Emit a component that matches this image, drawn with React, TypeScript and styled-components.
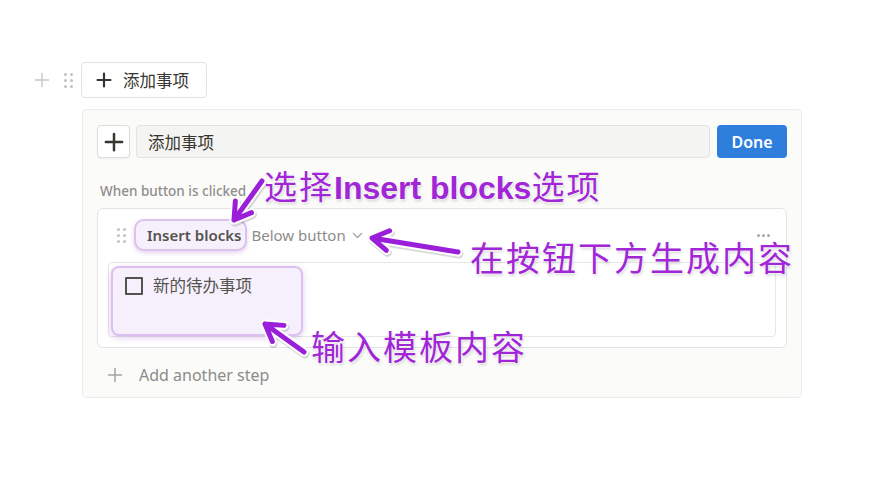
import styled, { createGlobalStyle } from "styled-components";

const GlobalStyle = createGlobalStyle`
  html, body {
    margin: 0;
    padding: 0;
    background: #ffffff;
  }
  body {
    font-family: "Noto Sans", "Noto Sans CJK SC", sans-serif;
    color: #37352f;
  }
`;

const Page = styled.div`
  position: relative;
  width: 888px;
  height: 489px;
  padding-top: 62px;
  box-sizing: border-box;
  overflow: hidden;
`;

const TopRow = styled.div`
  display: flex;
  align-items: center;
  height: 36px;
  padding-left: 34px;
`;

const GhostPlus = styled.span`
  display: flex;
  width: 16px;
  margin-right: 14px;
`;

const Handle = styled.span<{ $gap: number }>`
  display: grid;
  grid-template-columns: 3px 3px;
  gap: 3px 3px;
  margin-right: ${(p) => p.$gap}px;
  span {
    width: 3px;
    height: 3px;
    border-radius: 50%;
    background: #c3c2bf;
  }
`;

const AddButton = styled.div`
  display: flex;
  align-items: center;
  gap: 11px;
  height: 36px;
  box-sizing: border-box;
  padding: 0 17px 0 14px;
  border: 1px solid #e3e2e0;
  border-radius: 4px;
  background: #fff;
  font-size: 16.5px;
  color: #37352f;
`;

const Panel = styled.div`
  margin: 11px 0 0 82px;
  width: 720px;
  height: 289px;
  box-sizing: border-box;
  border: 1px solid #ebebe9;
  border-radius: 5px;
  background: #fbfbfa;
  padding: 15px 14px 0;
`;

const HeaderRow = styled.div`
  display: flex;
  gap: 6px;
  height: 33px;
`;

const PlusBox = styled.div`
  width: 33px;
  height: 33px;
  box-sizing: border-box;
  display: flex;
  align-items: center;
  justify-content: center;
  border: 1px solid #dddcda;
  border-radius: 4px;
  background: #fff;
  box-shadow: 0 1px 2px rgba(0, 0, 0, 0.06);
`;

const NameInput = styled.div`
  flex: 1;
  display: flex;
  align-items: center;
  box-sizing: border-box;
  padding-left: 11px;
  border: 1px solid #e2e2e0;
  border-radius: 4px;
  background: #f4f4f2;
  font-size: 16.5px;
  color: #37352f;
`;

const DoneButton = styled.div`
  width: 70px;
  margin-left: 1px;
  display: flex;
  align-items: center;
  justify-content: center;
  border-radius: 4px;
  background: #2e7fdc;
  color: #fff;
  font-size: 16px;
  font-weight: 600;
`;

const TriggerLabel = styled.div`
  margin: 24px 0 0 3px;
  font-size: 13.5px;
  line-height: 18px;
  font-weight: 500;
  color: #8f8e8b;
`;

const StepCard = styled.div`
  margin-top: 8px;
  height: 140px;
  box-sizing: border-box;
  border: 1px solid #e3e3e1;
  border-radius: 6px;
  background: #fff;
  padding: 10px 10px;
`;

const StepHeader = styled.div`
  display: flex;
  align-items: center;
  height: 32px;
  padding-left: 9px;
`;

const ActionPill = styled.div`
  display: flex;
  align-items: center;
  height: 32px;
  box-sizing: border-box;
  padding: 0 4px 0 11px;
  border: 2px solid #dcc3ee;
  border-radius: 10px;
  background: #f6f0fc;
  box-shadow: 0 2px 4px rgba(150, 80, 200, 0.25);
  font-size: 15px;
  font-weight: 600;
  color: #55534e;
`;

const Placement = styled.div`
  display: flex;
  align-items: center;
  gap: 6px;
  margin-left: 4px;
  font-size: 15px;
  color: #8d8c89;
`;

const MoreDots = styled.span`
  margin-left: auto;
  margin-right: 6px;
  display: flex;
  gap: 2px;
  span {
    width: 3px;
    height: 3px;
    border-radius: 50%;
    background: #a9a8a5;
  }
`;

const ContentArea = styled.div`
  margin-top: 11px;
  height: 75px;
  box-sizing: border-box;
  border: 1px solid #e6e6e4;
  border-radius: 4px;
  padding: 3px 2px;
`;

const TemplateBox = styled.div`
  width: 192px;
  height: 70px;
  box-sizing: border-box;
  border: 2px solid #dcc0ef;
  border-radius: 8px;
  background: #f6f0fd;
  box-shadow: 0 2px 6px rgba(160, 90, 210, 0.3);
  padding: 7px 0 0 12px;
  display: flex;
  align-items: flex-start;
  gap: 10px;
  font-size: 16.5px;
  line-height: 22px;
  color: #55534e;
`;

const Checkbox = styled.span`
  width: 18px;
  height: 18px;
  margin-top: 2px;
  box-sizing: border-box;
  border: 2px solid #55534e;
  border-radius: 1px;
`;

const AddStep = styled.div`
  display: flex;
  align-items: center;
  gap: 16px;
  height: 26px;
  margin-top: 14px;
  padding-left: 10px;
  font-size: 16px;
  color: #8d8c89;
`;

const Note = styled.div<{ $x: number; $y: number; $size: number }>`
  position: absolute;
  left: ${(p) => p.$x}px;
  top: ${(p) => p.$y}px;
  font-family: "Noto Sans CJK SC", sans-serif;
  font-size: ${(p) => p.$size}px;
  line-height: 40px;
  letter-spacing: 2px;
  color: #a026d6;
  white-space: nowrap;
  text-shadow: 0 0 2px #fff, 0 0 2px #fff, 1px 2px 3px rgba(0, 0, 0, 0.18);
  b {
    font-family: "Liberation Sans", Arial, sans-serif;
    font-weight: 700;
    font-size: 32px;
    letter-spacing: 0;
  }
`;

const Overlay = styled.svg`
  position: absolute;
  left: 0;
  top: 0;
  pointer-events: none;
`;

const Plus = ({ size, color, width }: { size: number; color: string; width: number }) => (
  <svg width={size} height={size} viewBox="0 0 16 16">
    <path d="M8 1.5v13M1.5 8h13" stroke={color} strokeWidth={width} strokeLinecap="round" />
  </svg>
);

const Dots = ({ gap }: { gap: number }) => (
  <Handle $gap={gap}>
    {Array.from({ length: 6 }).map((_, i) => (
      <span key={i} />
    ))}
  </Handle>
);

type Pt = [number, number];

const Arrow = ({ tail, tip }: { tail: Pt; tip: Pt }) => {
  const ang = Math.atan2(tail[1] - tip[1], tail[0] - tip[0]);
  const len = 19;
  const spread = 0.55;
  const w1: Pt = [tip[0] + len * Math.cos(ang + spread), tip[1] + len * Math.sin(ang + spread)];
  const w2: Pt = [tip[0] + len * Math.cos(ang - spread), tip[1] + len * Math.sin(ang - spread)];
  const d = `M${tail[0]} ${tail[1]}L${tip[0]} ${tip[1]}M${w1[0]} ${w1[1]}L${tip[0]} ${tip[1]}L${w2[0]} ${w2[1]}`;
  return (
    <g strokeLinecap="round" strokeLinejoin="round" fill="none">
      <path d={d} stroke="rgba(0,0,0,0.15)" strokeWidth={9} transform="translate(1 2)" />
      <path d={d} stroke="#ffffff" strokeWidth={9} />
      <path d={d} stroke="#9b1fd8" strokeWidth={5} />
    </g>
  );
};

export default function App() {
  return (
    <>
      <GlobalStyle />
      <Page>
        <TopRow>
          <GhostPlus>
            <Plus size={16} color="#c6c5c2" width={1.4} />
          </GhostPlus>
          <Dots gap={8} />
          <AddButton>
            <Plus size={16} color="#37352f" width={2.2} />
            添加事项
          </AddButton>
        </TopRow>

        <Panel>
          <HeaderRow>
            <PlusBox>
              <Plus size={20} color="#37352f" width={2} />
            </PlusBox>
            <NameInput>添加事项</NameInput>
            <DoneButton>Done</DoneButton>
          </HeaderRow>

          <TriggerLabel>When button is clicked</TriggerLabel>

          <StepCard>
            <StepHeader>
              <Dots gap={8} />
              <ActionPill>Insert blocks</ActionPill>
              <Placement>
                Below button
                <svg width="11" height="7" viewBox="0 0 11 7">
                  <path d="M1 1l4.5 4.5L10 1" stroke="#a5a4a1" strokeWidth="1.3" fill="none" />
                </svg>
              </Placement>
              <MoreDots>
                <span />
                <span />
                <span />
              </MoreDots>
            </StepHeader>
            <ContentArea>
              <TemplateBox>
                <Checkbox />
                新的待办事项
              </TemplateBox>
            </ContentArea>
          </StepCard>

          <AddStep>
            <Plus size={16} color="#a5a4a1" width={1.5} />
            Add another step
          </AddStep>
        </Panel>

        <Overlay width={888} height={489}>
          <Arrow tail={[262, 181]} tip={[234, 220]} />
          <Arrow tail={[458, 252]} tip={[372, 238]} />
          <Arrow tail={[304, 352]} tip={[265, 324]} />
        </Overlay>

        <Note $x={264} $y={165} $size={33}>
          选择<b>Insert blocks</b>选项
        </Note>
        <Note $x={470} $y={237} $size={34}>
          在按钮下方生成内容
        </Note>
        <Note $x={311} $y={326} $size={34}>
          输入模板内容
        </Note>
      </Page>
    </>
  );
}
